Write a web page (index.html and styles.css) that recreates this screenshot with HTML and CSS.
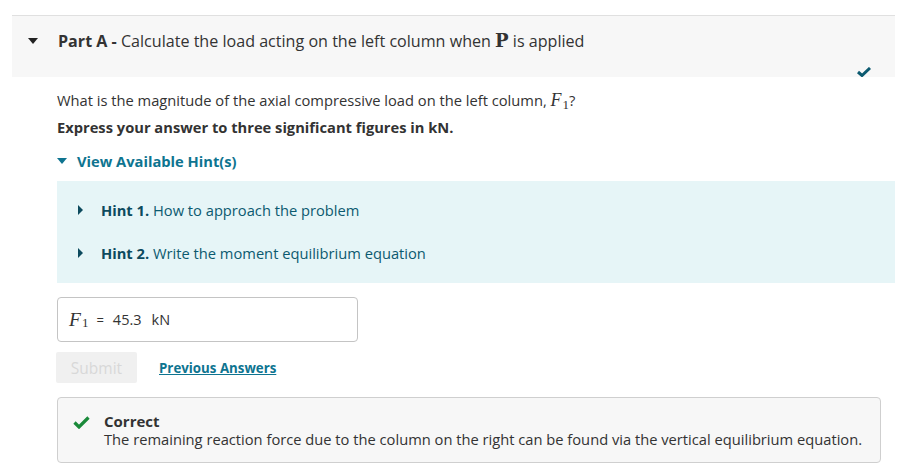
FILE: index.html
```html
<!DOCTYPE html>
<html>
<head>
<meta charset="utf-8">
<link rel="stylesheet" href="styles.css">
</head>
<body>
<div class="part">
  <div class="part-head">
    <div class="head-row">
      <span class="caret-down"></span>
      <span class="part-title"><b>Part A -</b> Calculate the load acting on the left column when <span class="mathbf">P</span> is applied</span>
    </div>
    <svg class="done" width="14" height="10" viewBox="0 0 14 10"><path d="M1 5 L5 8.5 L13 1" fill="none" stroke="#0c5a70" stroke-width="3"/></svg>
  </div>
  <div class="body">
    <p class="question">What is the magnitude of the axial compressive load on the left column, <span class="mathi">F</span><span class="sub">1</span>?</p>
    <p class="instr">Express your answer to three significant figures in kN.</p>
    <div class="hint-toggle"><span class="caret-down teal"></span><span>View Available Hint(s)</span></div>
    <div class="hints">
      <div class="hint"><span class="caret-right"></span><span><b>Hint 1.</b> How to approach the problem</span></div>
      <div class="hint"><span class="caret-right"></span><span><b>Hint 2.</b> Write the moment equilibrium equation</span></div>
    </div>
    <div class="answer">
      <span class="mathi big">F</span><span class="sub">1</span><span class="eq">=</span><span class="val">45.3</span><span class="unit">kN</span>
    </div>
    <div class="actions">
      <button class="submit">Submit</button>
      <a class="prev" href="#">Previous Answers</a>
    </div>
    <div class="feedback">
      <svg class="ok" width="17" height="13" viewBox="0 0 17 13"><path d="M1.5 6.5 L6 11 L15.5 1.5" fill="none" stroke="#1a8a3a" stroke-width="3.2"/></svg>
      <div class="fb-text">
        <div class="fb-title">Correct</div>
        <div>The remaining reaction force due to the column on the right can be found via the vertical equilibrium equation.</div>
      </div>
    </div>
  </div>
</div>
</body>
</html>
```
FILE: styles.css
```css
* { box-sizing: border-box; }
body {
  margin: 0;
  padding: 15px 11px 0 12px;
  background: #fff;
  font-family: "Open Sans", "Noto Sans", sans-serif;
  font-size: 14.7px;
  color: #333;
}
.part-head {
  border-top: 1px solid #e0e0e0;
  background: #f7f7f7;
  height: 62px;
  display: flex;
  flex-direction: column;
  padding: 14px 24px 0 16px;
}
.head-row {
  display: flex;
  align-items: center;
  height: 22px;
  font-size: 16.1px;
}
.done { align-self: flex-end; margin-top: 15px; }
.part-title { margin-left: 20px; color: #333; }
.part-title b { font-weight: 700; }
.mathbf { font-family: "DejaVu Serif", serif; font-weight: bold; font-size: 18px; }
.mathi { font-family: "Liberation Serif", serif; font-style: italic; font-size: 18px; }
.mathi.big { font-size: 19.5px; }
.sub { font-family: "Liberation Serif", serif; font-size: 13px; position: relative; top: 3px; margin-left: 1px; }
.caret-down {
  display: inline-block;
  width: 0; height: 0;
  border-left: 5px solid transparent;
  border-right: 5px solid transparent;
  border-top: 6px solid #222;
}
.caret-down.teal { border-left-width: 5.5px; border-right-width: 5.5px; border-top-color: #0e7490; }
.caret-right {
  display: inline-block;
  width: 0; height: 0;
  border-top: 5px solid transparent;
  border-bottom: 5px solid transparent;
  border-left: 5px solid #0c4a5e;
}
.body { padding-left: 45px; }
.question { margin: 13px 0 0; line-height: 20px; }
.instr { margin: 5px 0 0; font-weight: 700; line-height: 20px; }
.hint-toggle {
  margin-top: 14px;
  display: flex; align-items: center; gap: 10px;
  color: #0e7490; font-weight: 700; line-height: 20px;
}
.hints {
  margin-top: 10px;
  background: #e6f5f7;
  padding: 19px 0 20px 21px;
  height: 102px;
  display: flex; flex-direction: column; gap: 23px;
}
.hint { display: flex; align-items: center; gap: 18px; color: #0c5a70; line-height: 20px; }
.hint b { color: #0c4a5e; }
.answer {
  margin-top: 14px;
  width: 301px; height: 45px;
  border: 1px solid #c4c4c4;
  border-radius: 4px;
  display: flex; align-items: center;
  padding-left: 11px;
}
.answer .eq { margin: 0 9px 0 8px; font-size: 13px; }
.answer .val { font-size: 14.5px; }
.answer .unit { margin-left: 10px; font-size: 14.5px; }
.actions { margin-top: 10px; display: flex; align-items: center; gap: 22px; margin-left: -1px; }
.submit {
  width: 81px; height: 31px;
  background: #f0f0f0;
  border: none; border-radius: 2px;
  color: #d8d8d8;
  font-family: inherit; font-size: 15.5px;
}
.prev { color: #0e7490; font-weight: 700; text-decoration: underline; font-size: 13.3px; }
.feedback {
  margin-top: 14px;
  width: 824px;
  height: 66px;
  background: #f7f7f7;
  border: 1px solid #cfcfcf;
  border-radius: 4px;
  padding: 14px 0 0 15px;
  display: flex; gap: 14px; align-items: flex-start;
}
.ok { margin-top: 4px; }
.fb-text { line-height: 18px; color: #333; }
.fb-title { font-weight: 700; font-size: 15px; }
```
